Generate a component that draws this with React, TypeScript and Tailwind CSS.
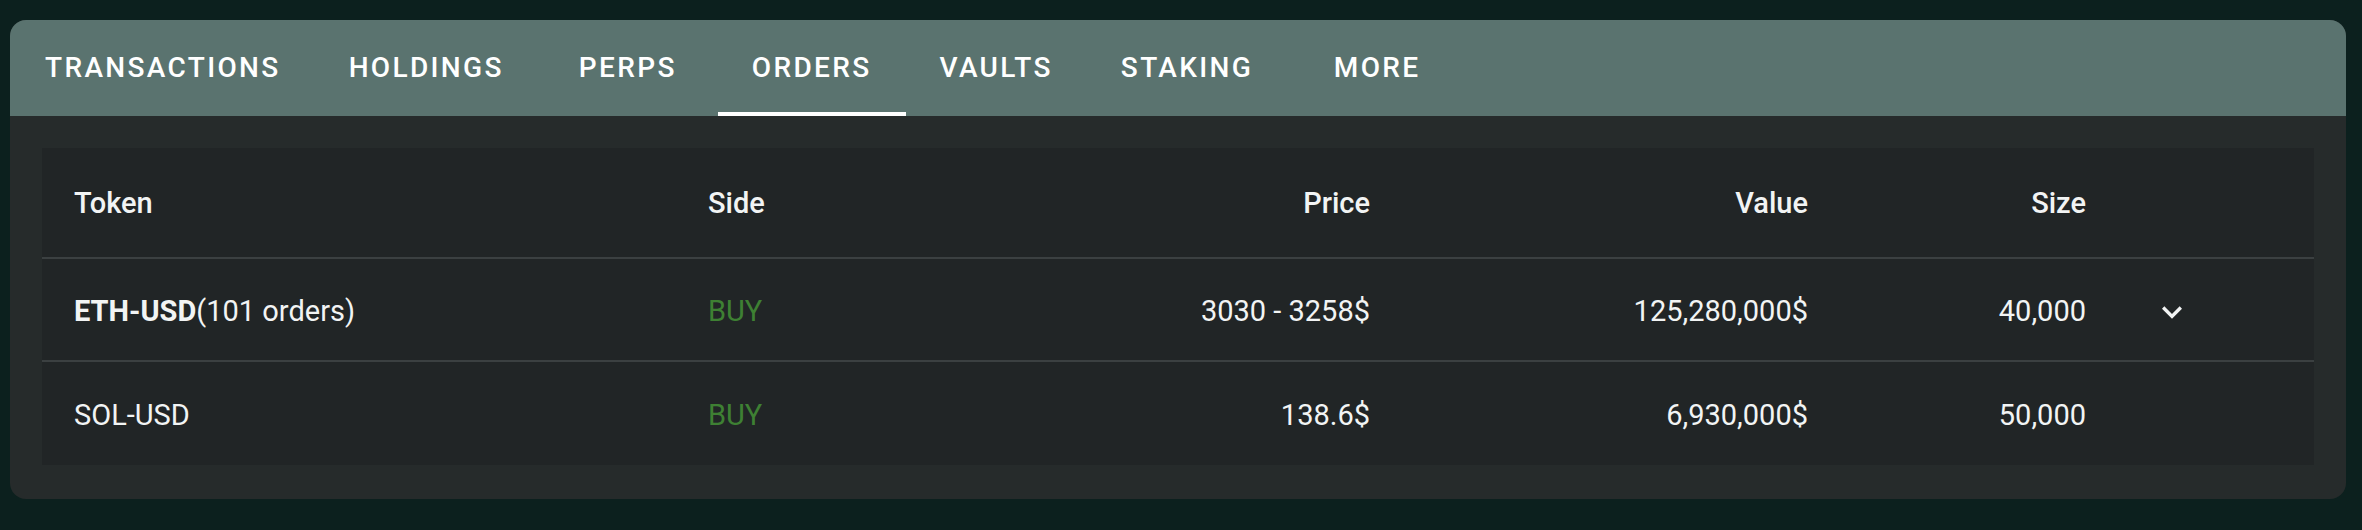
import { useState } from "react";

const TABS = ["Transactions", "Holdings", "Perps", "Orders", "Vaults", "Staking", "More"];

type Row = {
  token: string;
  note?: string;
  side: string;
  price: string;
  value: string;
  size: string;
  expandable?: boolean;
};

const ROWS: Row[] = [
  { token: "ETH-USD", note: "(101 orders)", side: "BUY", price: "3030 - 3258$", value: "125,280,000$", size: "40,000", expandable: true },
  { token: "SOL-USD", side: "BUY", price: "138.6$", value: "6,930,000$", size: "50,000" },
];

const COLS = "grid grid-cols-[634px_363px_363px_438px_278px_1fr] items-center";

function ExpandMore() {
  return (
    <svg width="40" height="40" viewBox="0 0 24 24" fill="#f2f4f4" aria-hidden="true">
      <path d="M16.59 8.59 12 13.17 7.41 8.59 6 10l6 6 6-6z" />
    </svg>
  );
}

export default function App() {
  const [active, setActive] = useState("Orders");

  return (
    <div className="w-[2362px] h-[530px] bg-[#0c201e] pt-[20px] pl-[10px] pr-[16px] font-['Roboto',sans-serif] text-[#f2f4f4]">
      <div className="w-[2336px] h-[479px] rounded-[16px] bg-[#262b2b] overflow-hidden flex flex-col">
        {/* tab strip */}
        <nav className="h-[96px] shrink-0 bg-[#5a736f] flex pl-px">
          {TABS.map((t) => (
            <button
              key={t}
              type="button"
              onClick={() => setActive(t)}
              className="relative h-full min-w-[180px] px-[34px] flex items-center justify-center uppercase text-[28px] font-medium tracking-[2.35px] text-white"
            >
              {t}
              {active === t && (
                <span className="absolute left-0 right-0 bottom-0 h-[4px] bg-white" />
              )}
            </button>
          ))}
        </nav>

        {/* table */}
        <div className="p-[32px] text-[29px]">
          <div className="bg-[#212526]">
            <div className={`${COLS} h-[111px] border-b-2 border-[#3b4041] font-medium`}>
              <div className="pl-[32px] pt-[2px]">Token</div>
              <div className="pl-[32px] pt-[2px]">Side</div>
              <div className="pr-[32px] pt-[2px] text-right">Price</div>
              <div className="pr-[32px] pt-[2px] text-right">Value</div>
              <div className="pr-[32px] pt-[2px] text-right">Size</div>
              <div />
            </div>
            {ROWS.map((r, i) => (
              <div
                key={r.token}
                className={`${COLS} ${i < ROWS.length - 1 ? "h-[103px] border-b-2 border-[#3b4041]" : "h-[103px]"}`}
              >
                <div className="pl-[32px] pt-[4px]">
                  {r.note ? (
                    <>
                      <span className="font-bold">{r.token}</span>
                      {r.note}
                    </>
                  ) : (
                    r.token
                  )}
                </div>
                <div className="pl-[32px] pt-[4px] text-[#3e8033]">{r.side}</div>
                <div className="pr-[32px] pt-[4px] text-right">{r.price}</div>
                <div className="pr-[32px] pt-[4px] text-right">{r.value}</div>
                <div className="pr-[32px] pt-[4px] text-right">{r.size}</div>
                <div className="pl-[34px] pt-[4px] flex items-center">
                  {r.expandable && <ExpandMore />}
                </div>
              </div>
            ))}
          </div>
        </div>
      </div>
    </div>
  );
}
